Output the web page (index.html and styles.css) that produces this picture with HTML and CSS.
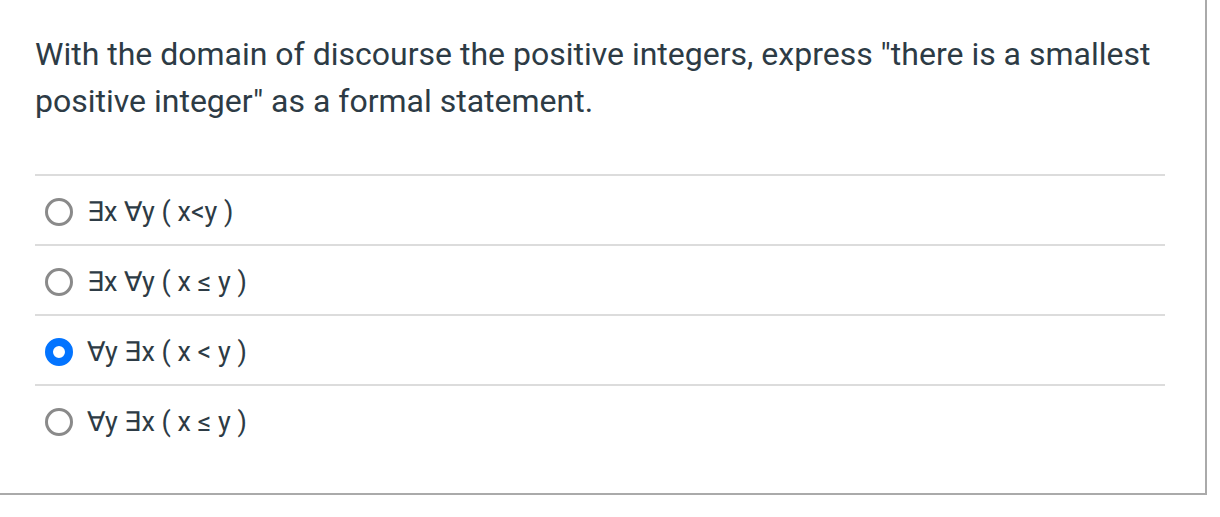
FILE: index.html
```html
<!DOCTYPE html>
<html lang="en">
<head>
<meta charset="utf-8">
<title>Question</title>
<link rel="stylesheet" href="styles.css">
</head>
<body>
<div class="card">
  <div class="question">With the domain of discourse the positive integers, express "there is a smallest positive integer" as a formal statement.</div>
  <div class="answers">
    <label class="answer"><span class="radio"></span><span class="text">∃x ∀y ( x&lt;y )</span></label>
    <label class="answer"><span class="radio"></span><span class="text">∃x ∀y ( x ≤ y )</span></label>
    <label class="answer"><span class="radio checked"></span><span class="text">∀y ∃x ( x &lt; y )</span></label>
    <label class="answer"><span class="radio"></span><span class="text">∀y ∃x ( x ≤ y )</span></label>
  </div>
</div>
</body>
</html>
```
FILE: styles.css
```css
html, body {
  margin: 0;
  padding: 0;
  background: #ffffff;
}
body {
  font-family: Roboto, "Liberation Sans", sans-serif;
  color: #2d3b45;
}
.card {
  box-sizing: border-box;
  width: 1207px;
  height: 495px;
  border-right: 2px solid #aaaaaa;
  border-bottom: 2px solid #aaaaaa;
  padding: 31px 40px 0 35px;
}
.question {
  font-size: 32px;
  line-height: 47px;
  margin-bottom: 49px;
}
.answers {
  display: flex;
  flex-direction: column;
}
.answer {
  display: flex;
  align-items: center;
  gap: 14px;
  height: 70px;
  box-sizing: border-box;
  border-top: 2px solid #dcdcdc;
  padding: 3px 0 0 10px;
}
.radio {
  width: 28px;
  height: 28px;
  box-sizing: border-box;
  border-radius: 50%;
  border: 3px solid #8a8a8a;
  flex: none;
}
.radio.checked {
  border: 8px solid #0374ff;
}
.text {
  font-size: 27px;
}
```
